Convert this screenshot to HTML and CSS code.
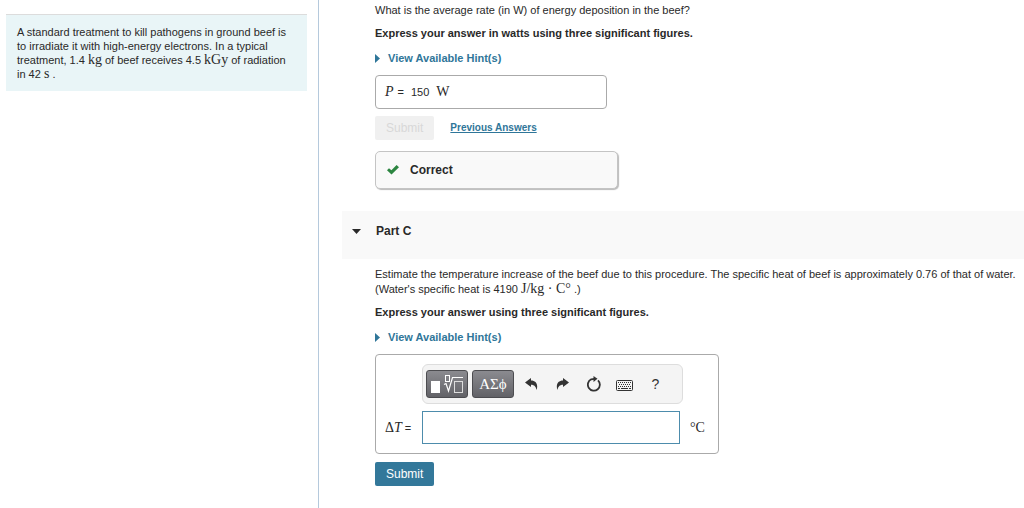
FILE: index.html
```html
<!DOCTYPE html>
<html lang="en">
<head>
    <meta charset="UTF-8">
    <meta name="viewport" content="width=device-width, initial-scale=1.0">
    <title>Energy Deposition in Beef</title>
    <link rel="stylesheet" href="styles.css">
</head>
<body>
    <aside class="sidebar">
        <p class="intro">A standard treatment to kill pathogens in ground beef is to irradiate it with high-energy electrons. In a typical treatment, 1.4 <span class="math">kg</span> of beef receives 4.5 <span class="math">kGy</span> of radiation in 42 <span class="math">s</span> .</p>
    </aside>

    <main class="content">
        <!-- Part B -->
        <section class="part">
            <p class="question">What is the average rate (in W) of energy deposition in the beef?</p>
            <p class="instructions">Express your answer in watts using three significant figures.</p>
            <a class="hints" href="#"><svg width="5" height="9" viewBox="0 0 5 9"><path d="M0 0L5 4.5L0 9Z" fill="currentColor"/></svg>View Available Hint(s)</a>
            <div class="answer">
                <span class="math"><i>P</i></span><span>=</span><span class="value">150</span><span class="math">W</span>
            </div>
            <div class="actions">
                <button class="submit" type="button" disabled>Submit</button>
                <a class="previous" href="#">Previous Answers</a>
            </div>
            <div class="feedback">
                <svg width="12" height="10" viewBox="0 0 12 10"><path d="M0 5.2L2 3.2L4.4 5.300L9.600 0L12 2.200L4.500 9.600Z" fill="#2c8540"/></svg>
                Correct
            </div>
        </section>

        <!-- Part C -->
        <h2 class="part-header">
            <svg width="9" height="5" viewBox="0 0 9 5"><path d="M0 0H9L4.5 5Z" fill="currentColor"/></svg>
            Part C
        </h2>
        <section class="part">
            <p class="question">Estimate the temperature increase of the beef due to this procedure. The specific heat of beef is approximately 0.76 of that of water. (Water's specific heat is 4190 <span class="math">J/kg · C°</span> .)</p>
            <p class="instructions">Express your answer using three significant figures.</p>
            <a class="hints" href="#"><svg width="5" height="9" viewBox="0 0 5 9"><path d="M0 0L5 4.5L0 9Z" fill="currentColor"/></svg>View Available Hint(s)</a>
            <div class="editor">
                <div class="toolbar">
                    <button class="dark" type="button" aria-label="Templates">
                        <svg width="32" height="18" viewBox="0 0 32 18" fill="none" stroke="#fff">
                            <rect x="0" y="6" width="9" height="12" fill="#fff" stroke="none"/>
                            <rect x="14.5" y=".5" width="4" height="6"/>
                            <path d="M13 9.500L15 8.500L17.500 16L21.500 2.500H32" stroke-width="1.200"/>
                            <rect x="23.500" y="6.500" width="8" height="11" stroke="#ddd"/>
                        </svg>
                    </button>
                    <button class="dark" type="button" aria-label="Symbols">ΑΣϕ</button>
                    <button class="tool" type="button" aria-label="Undo">
                        <svg width="13" height="12" viewBox="0 0 13 12"><path d="M0 4.500L6 0V2.500C11 2.500 13.500 6.500 11.500 12C11 8.800 9.500 6.700 6 6.700V9Z" fill="currentColor"/></svg>
                    </button>
                    <button class="tool" type="button" aria-label="Redo">
                        <svg width="13" height="12" viewBox="0 0 13 12"><path d="M13 4.500L7 0V2.500C2 2.500 -.5 6.500 1.500 12C2 8.800 3.500 6.700 7 6.700V9Z" fill="currentColor"/></svg>
                    </button>
                    <button class="tool" type="button" aria-label="Reset">
                        <svg width="14" height="16" viewBox="0 0 14 16"><path d="M11 4.300A6 6 0 1 1 4.200 3.300L7.500 2.800" fill="none" stroke="currentColor" stroke-width="1.800"/><path d="M6.500 0L10.500 2.800L6.500 6Z" fill="currentColor"/></svg>
                    </button>
                    <button class="tool keys" type="button" aria-label="Keyboard shortcuts">
                        <svg width="17" height="11" viewBox="0 0 17 11" fill="none" stroke="currentColor"><rect x=".5" y=".5" width="16" height="10" rx="1"/><path d="M2 2.500H15M3 4.500H15M2 6.500H15" stroke-dasharray="1 1"/><path d="M2 8.500H4M5 8.500H12M13 8.500H15"/></svg>
                    </button>
                    <button class="tool" type="button" aria-label="Help">?</button>
                </div>
                <label class="name" for="delta-t"><span class="math">Δ<i>T</i></span> =</label>
                <input class="field" id="delta-t" type="text">
                <span class="math unit">°C</span>
            </div>
            <button class="submit" type="button">Submit</button>
        </section>
    </main>
</body>
</html>
```
FILE: styles.css
```css
* {
    box-sizing: border-box;
}
body {
    display: flex;
    min-height: 100vh;
    margin: 0;
    font-family: "Liberation Sans", Arial, sans-serif;
    font-size: 11px;
    line-height: 14px;
    color: #292929;
    background-color: #fff;
}
p {
    margin: 0;
}
svg {
    flex: none;
}
button {
    font-family: inherit;
    cursor: pointer;
}
.sidebar {
    flex: 0 0 319px;
    padding: 14px 11px 0 6px;
    border-right: 1px solid #b5c9dc;
}
.intro {
    padding: 10px 20px 10px 11px;
    border-top: 1px solid #dcdcdc;
    background-color: #e9f5f7;
}
.math {
    font-family: "Liberation Serif", "Times New Roman", serif;
    font-size: 14px;
    line-height: 10px;
}
.content {
    flex: 1;
    min-width: 0;
    padding: 3px 0 20px 23px;
}
.part {
    padding: 0 8px 0 33px;
}
.question {
    line-height: 15px;
}
.instructions {
    margin-top: 8px;
    font-weight: bold;
}
.hints {
    display: flex;
    align-items: center;
    gap: 8px;
    width: fit-content;
    margin: 11px 0 10px;
    font-weight: bold;
    color: #2f7699;
    text-decoration: none;
}
.answer {
    display: flex;
    align-items: baseline;
    gap: 4px;
    max-width: 232px;
    padding: 9px;
    border: 1px solid #aaa;
    border-radius: 4px;
}
.value {
    margin: 0 3px;
}
.actions {
    display: flex;
    align-items: center;
    gap: 16px;
    margin: 7px 0 11px;
}
.submit {
    height: 24px;
    padding: 0 11px;
    border: 0;
    border-radius: 2px;
    font-size: 12px;
    color: #fff;
    background-color: #33789a;
}
.submit:disabled {
    color: #d8d8d8;
    background-color: #f0f0f0;
    cursor: default;
}
.previous {
    font-size: 10px;
    font-weight: bold;
    color: #2f7699;
}
.feedback {
    display: flex;
    align-items: center;
    gap: 11px;
    max-width: 243px;
    height: 38px;
    padding: 0 11px;
    border: 1px solid #c4c4c4;
    border-radius: 5px;
    box-shadow: 1px 1px 1px #bbb;
    font-size: 12px;
    font-weight: bold;
    background-color: #f9f9f9;
}
.part-header {
    display: flex;
    align-items: center;
    gap: 15px;
    height: 48px;
    margin: 22px 0 8px;
    padding: 0 10px 8px;
    font-size: 12px;
    background-color: #f9f9f9;
}
.editor {
    display: grid;
    grid-template-columns: 37px 1fr 29px;
    align-items: center;
    row-gap: 7px;
    max-width: 344px;
    margin-bottom: 8px;
    padding: 9px;
    border: 1px solid #aaa;
    border-radius: 4px;
}
.toolbar {
    grid-column: 2 / 4;
    display: flex;
    align-items: center;
    gap: 4px;
    width: 261px;
    height: 40px;
    padding: 0 3px;
    border: 1px solid #ddd;
    border-radius: 6px;
    background-color: #f4f4f4;
}
.dark {
    display: flex;
    align-items: center;
    justify-content: center;
    width: 42px;
    height: 28px;
    padding: 0;
    border: 1px solid #4c4c50;
    border-radius: 3px;
    font-family: "Liberation Serif", "Times New Roman", serif;
    font-size: 15px;
    color: #fff;
    background: linear-gradient(#8b8b90, #626267);
}
.tool {
    display: flex;
    align-items: center;
    justify-content: center;
    width: 27px;
    height: 28px;
    padding: 0;
    border: 0;
    font-size: 14px;
    color: #333;
    background: none;
}
.keys {
    padding-top: 2px;
}
.field {
    width: 100%;
    height: 33px;
    padding: 0 6px;
    border: 1px solid #4d8cac;
    font-size: 14px;
}
.unit {
    padding-left: 10px;
}
```
